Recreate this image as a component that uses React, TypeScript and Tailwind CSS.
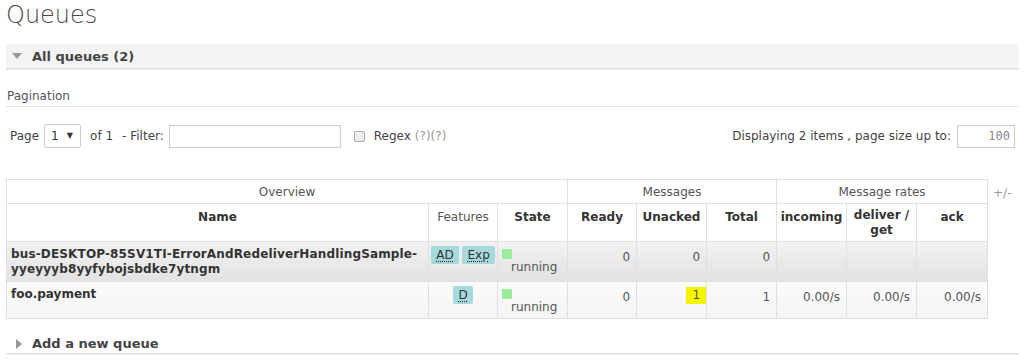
import React from "react";

const font = { fontFamily: '"DejaVu Sans", Verdana, sans-serif' };

function Badge({ label }: { label: string }) {
  return (
    <span className="inline-block bg-[#a6d9dc] px-[5px] py-[2px] rounded-[2px] text-[#333] underline decoration-dotted underline-offset-2 leading-[14px]">
      {label}
    </span>
  );
}

function StateCell() {
  return (
    <td className="border border-[#e0e0e0] px-[4px] pt-[7px] align-top text-left">
      <div className="w-[10px] h-[10px] bg-[#9aee9a]" />
      <div className="pl-[9px] text-[#555] leading-[16px]">running</div>
    </td>
  );
}

const numCell = "border border-[#e0e0e0] px-[6px] pt-[6px] align-top text-right text-[#555]";

export default function App() {
  return (
    <div className="bg-white w-[1024px] h-[362px] overflow-hidden text-[12px] text-[#484848]" style={font}>
      <h1 className="pl-[6px] pt-[1px] text-[24px] font-light leading-[28px] text-[#484848]">Queues</h1>

      <div className="mx-[6px] mr-[5px] mt-[15px] h-[25px] flex items-center bg-[#f4f4f4] border-b border-[#dcdcdc] shadow-[0_1px_0_#f0f0f0]">
        <span className="ml-[6px] w-0 h-0 border-l-[5px] border-r-[5px] border-t-[6px] border-l-transparent border-r-transparent border-t-[#999]" />
        <span className="ml-[10px] mt-[2px] font-bold text-[13px] text-[#444]">All queues (2)</span>
      </div>

      <div className="mx-[6px] mr-[5px] mt-[19px] pb-[2px] border-b border-[#e4e4e4] pl-[1px] text-[12px] text-[#555] leading-[16px]">
        Pagination
      </div>

      <div className="mt-[16px] flex items-center pl-[10px] pr-[9px] h-[26px]">
        <span className="text-[#444]">Page</span>
        <div className="ml-[5px] w-[37px] h-[24px] border border-[#ccc] rounded-[2px] flex items-center pl-[6px] text-[#333]">
          1<span className="ml-[8px] text-[8px]">▼</span>
        </div>
        <span className="ml-[9px] text-[#444]">of 1</span>
        <span className="ml-[9px] text-[#444]">- Filter:</span>
        <div className="ml-[5px] w-[172px] h-[23px] border border-[#ccc]" />
        <div className="ml-[13px] w-[11px] h-[11px] border border-[#aaa] bg-[#eee] rounded-[2px]" />
        <span className="ml-[9px] text-[#444]">Regex</span>
        <span className="ml-[4px] text-[#999]">(?)(?)</span>
        <span className="ml-auto text-[#444]">Displaying 2 items , page size up to:</span>
        <div className="ml-[6px] w-[58px] h-[23px] border border-[#ccc] text-right pr-[4px] leading-[21px] text-[#888]" style={{ fontFamily: '"DejaVu Sans Mono", monospace' }}>
          100
        </div>
      </div>

      <div className="mt-[30px] flex items-start pl-[6px]">
        <table className="table-fixed border-collapse w-[981px] text-[12px] text-[#484848]">
          <colgroup>
            <col className="w-[422px]" />
            <col className="w-[69px]" />
            <col className="w-[70px]" />
            <col className="w-[69px]" />
            <col className="w-[70px]" />
            <col className="w-[70px]" />
            <col className="w-[70px]" />
            <col className="w-[70px]" />
            <col className="w-[71px]" />
          </colgroup>
          <thead>
            <tr className="h-[24px]">
              <th colSpan={3} className="border border-[#e0e0e0] font-normal text-[#555]">Overview</th>
              <th colSpan={3} className="border border-[#e0e0e0] font-normal text-[#555]">Messages</th>
              <th colSpan={3} className="border border-[#e0e0e0] font-normal text-[#555]">Message rates</th>
            </tr>
            <tr className="h-[38px]">
              <th className="border border-[#e0e0e0] align-top pt-[4px] text-[#333]">Name</th>
              <th className="border border-[#e0e0e0] align-top pt-[4px] font-normal text-[#555]">Features</th>
              <th className="border border-[#e0e0e0] align-top pt-[4px] text-[#333]">State</th>
              <th className="border border-[#e0e0e0] align-top pt-[4px] text-[#333]">Ready</th>
              <th className="border border-[#e0e0e0] align-top pt-[4px] text-[#333]">Unacked</th>
              <th className="border border-[#e0e0e0] align-top pt-[4px] text-[#333]">Total</th>
              <th className="border border-[#e0e0e0] align-top pt-[4px] text-[#333]">incoming</th>
              <th className="border border-[#e0e0e0] align-top pt-[4px] text-[#333] leading-[15px]">deliver /<br />get</th>
              <th className="border border-[#e0e0e0] align-top pt-[4px] text-[#333]">ack</th>
            </tr>
          </thead>
          <tbody>
            <tr className="h-[40px] bg-gradient-to-b from-[#f2f2f2] to-[#e2e2e2]">
              <td className="border border-[#e0e0e0] align-top pl-[4px] pt-[5px] font-bold text-[#333] leading-[15px] tracking-[0.15px]">
                bus-DESKTOP-85SV1TI-ErrorAndRedeliverHandlingSample-
                <br />
                yyeyyyb8yyfybojsbdke7ytngm
              </td>
              <td className="border border-[#e0e0e0] align-top pt-[4px] text-center">
                <Badge label="AD" /> <Badge label="Exp" />
              </td>
              <StateCell />
              <td className={numCell}>0</td>
              <td className={numCell}>0</td>
              <td className={numCell}>0</td>
              <td className="border border-[#e0e0e0]" />
              <td className="border border-[#e0e0e0]" />
              <td className="border border-[#e0e0e0]" />
            </tr>
            <tr className="h-[37px] bg-gradient-to-b from-[#fbfbfb] to-[#f4f4f4]">
              <td className="border border-[#e0e0e0] align-top pl-[4px] pt-[5px] font-bold text-[#333] leading-[15px]">
                foo.payment
              </td>
              <td className="border border-[#e0e0e0] align-top pt-[4px] text-center">
                <Badge label="D" />
              </td>
              <StateCell />
              <td className={numCell}>0</td>
              <td className="border border-[#e0e0e0] align-top pt-[4px] text-right text-[#555]">
                <span className="inline-block bg-[#f5f500] px-[6px] leading-[17px]">1</span>
              </td>
              <td className={numCell}>1</td>
              <td className={numCell}>0.00/s</td>
              <td className={numCell}>0.00/s</td>
              <td className={numCell}>0.00/s</td>
            </tr>
          </tbody>
        </table>
        <span className="ml-[5px] mt-[5px] text-[#999]">+/-</span>
      </div>

      <div className="mx-[6px] mr-[5px] mt-[15px] h-[20px] flex items-center border-b border-[#ddd] shadow-[0_1px_0_#f0f0f0]">
        <span className="ml-[10px] w-0 h-0 border-t-[5px] border-b-[5px] border-l-[6px] border-t-transparent border-b-transparent border-l-[#999]" />
        <span className="ml-[10px] font-bold text-[13px] text-[#444]">Add a new queue</span>
      </div>
    </div>
  );
}
